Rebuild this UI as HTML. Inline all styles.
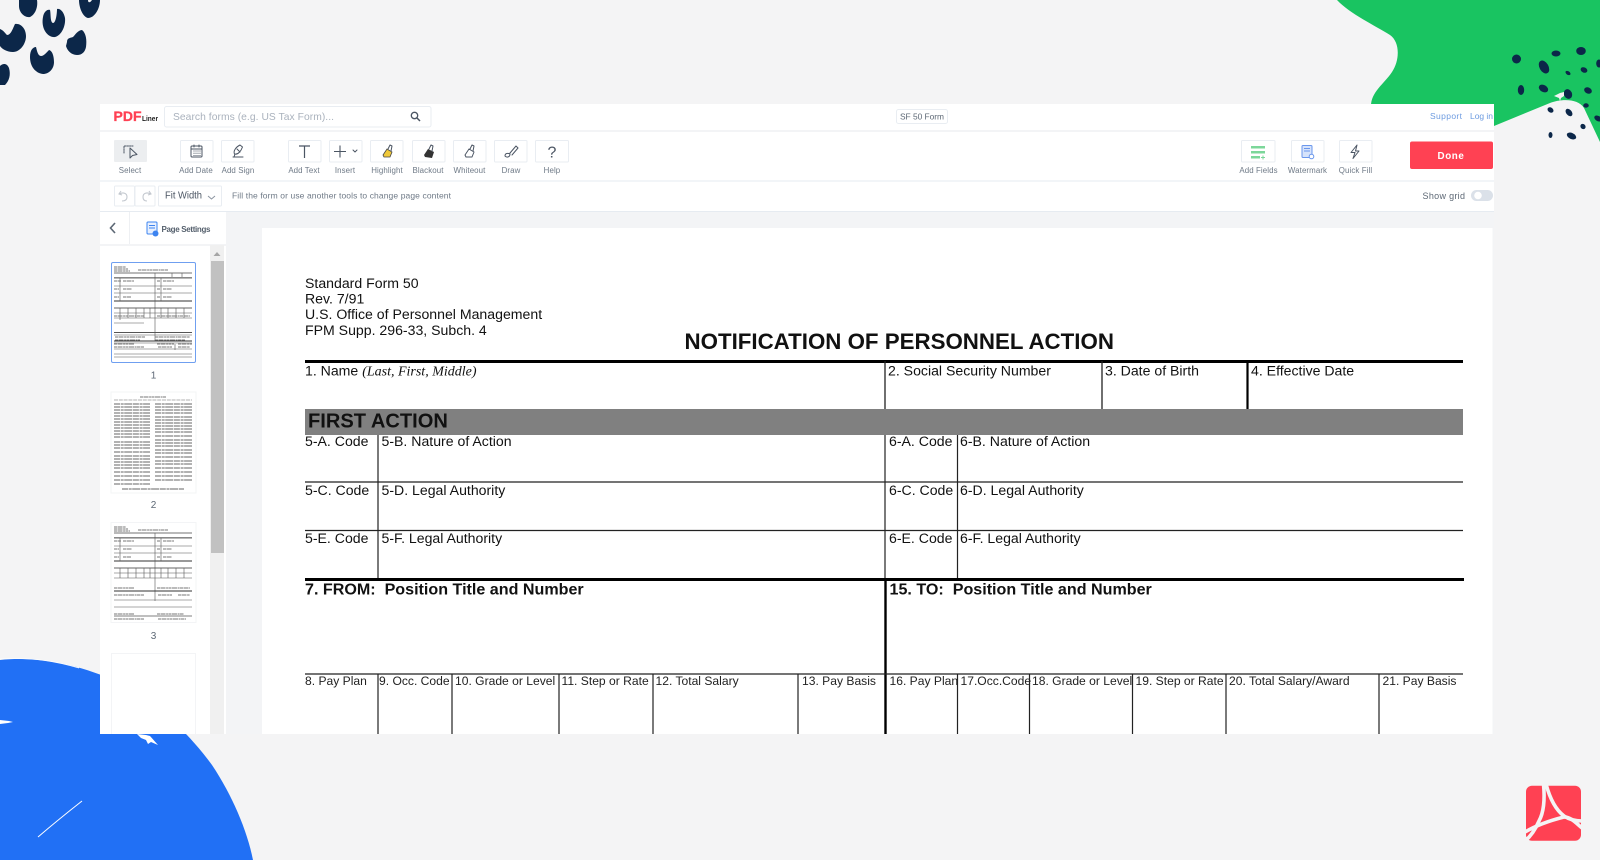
<!DOCTYPE html>
<html lang="en">
<head>
<meta charset="utf-8">
<title>SF 50 Form</title>
<style>
html,body{margin:0;padding:0;width:1600px;height:860px;overflow:hidden;background:#f4f4f5}
svg{display:block;position:absolute;left:0;top:0;filter:blur(.35px)}
text{font-family:"Liberation Sans",Arial,sans-serif;white-space:pre}
.l{font-size:7.9px;fill:#6f7a87;text-anchor:middle;letter-spacing:.1px}
.b{fill:#fff;stroke:#e9edf2;stroke-width:1}
.i{fill:none;stroke:#4b5563;stroke-width:1;stroke-linecap:round;stroke-linejoin:round}
.f{font-size:14.1px;fill:#111}
.s{font-size:12.1px;fill:#222}
.fb{font-size:16.1px;font-weight:bold;fill:#111}
.k{stroke:#222;stroke-width:1.2;fill:none}
.kk{stroke:#000;stroke-width:3;fill:none}
.d{fill:#0c2749}
.th{stroke:#555;stroke-width:.6;fill:none}
.tt{stroke:#777;stroke-width:.9;fill:none;stroke-dasharray:3 .5 5 .6 2 .4}
</style>
</head>
<body>
<svg width="1600" height="860" viewBox="0 0 1600 860" xmlns="http://www.w3.org/2000/svg">
<!-- decorative background -->
<path d="M1337 0C1350 14 1376 26 1390 35C1400 42 1400 60 1392 72C1384 84 1371 92 1371 106L1371 130L1494 126L1550 103C1560 99 1578 98 1584 108L1600 142L1600 0Z" fill="#19c461"/>
<path d="M0 660C40 656 80 665 118 682C160 705 190 735 212 765C232 795 247 830 253 860L0 860Z" fill="#2170f5"/>
<path d="M0 659C35 657 58 662 79 668" fill="none" stroke="#fff" stroke-width=".7"/>
<path d="M38 837C52 825 68 812 82 801" fill="none" stroke="#fff" stroke-width="1"/>
<path d="M0 720L9 721L13 722L8 723L0 724Z" fill="#fff"/>

<!-- top left dark blobs -->
<path class="d" d="M19 0L37 0C38 6 36 14 30 17C24 18 19 12 19 6Z"/>
<path class="d" d="M43 17C44 11 48 9 50 10C51 14 50 22 53 23C56 23 57 13 57 9C60 8 64 12 65 18C66 27 60 38 53 37C46 36 41 27 43 17Z"/>
<path class="d" d="M79 0L100 0C100 8 95 18 88 18C83 17 79 8 79 0ZM88 0C88 3 90 3 92 0Z"/>
<path class="d" d="M0 29C3 30 5 33 7 35C11 35 13 28 15 24C21 23 26 29 26 36C26 44 20 52 13 52C7 52 2 49 0 46Z"/>
<path class="d" d="M67 42C67 38 70 38 73 37C75 35 78 30 82 30C86 33 87 40 86 47C85 52 82 55 77 55C71 55 67 50 66 46Z"/>
<path class="d" d="M30 57C30 50 33 47 36 47C37 51 38 56 41 56C44 56 47 52 49 50C53 51 54 58 54 62C54 69 49 74 43 74C35 73 30 66 30 57Z"/>
<path class="d" d="M0 66C3 63 7 63 9 68C11 75 9 81 5 85L0 85Z"/>

<!-- right dots -->
<g class="d">
<ellipse cx="1516.5" cy="59" rx="4.5" ry="4.5"/>
<ellipse cx="1544" cy="67" rx="4.5" ry="7" transform="rotate(-30 1544 67)"/>
<ellipse cx="1556" cy="53.5" rx="4.5" ry="3"/>
<ellipse cx="1581" cy="51" rx="4.8" ry="4"/>
<ellipse cx="1599" cy="63.5" rx="2.8" ry="4"/>
<ellipse cx="1568" cy="73" rx="2.8" ry="1.8" transform="rotate(35 1568 73)"/>
<ellipse cx="1584" cy="70" rx="3.5" ry="2.6" transform="rotate(25 1584 70)"/>
<ellipse cx="1521" cy="90" rx="3.2" ry="5"/>
<ellipse cx="1543.5" cy="88.5" rx="5" ry="3.5" transform="rotate(30 1543.5 88.5)"/>
<ellipse cx="1568" cy="94" rx="4" ry="5" transform="rotate(-25 1568 94)"/>
<ellipse cx="1588" cy="90.5" rx="4" ry="3" transform="rotate(25 1588 90.5)"/>
<ellipse cx="1586" cy="105.5" rx="2.8" ry="2.2"/>
<ellipse cx="1550.5" cy="110" rx="3.2" ry="2.5" transform="rotate(35 1550.5 110)"/>
<ellipse cx="1569" cy="112.5" rx="4.2" ry="2.8" transform="rotate(50 1569 112.5)"/>
<ellipse cx="1598" cy="118.5" rx="4" ry="2.6" transform="rotate(30 1598 118.5)"/>
<ellipse cx="1583" cy="126.5" rx="2.8" ry="2.4" transform="rotate(45 1583 126.5)"/>
<ellipse cx="1550.5" cy="135" rx="2" ry="3"/>
<ellipse cx="1571.5" cy="136" rx="5" ry="3" transform="rotate(25 1571.5 136)"/>
</g>
<path d="M1554 96L1560 93L1564 92L1564 96L1561 98L1560 101L1559 98Z" fill="#f4f4f5"/>

<!-- PDF badge -->
<rect x="1526" y="785.7" width="55" height="55" rx="6" fill="#ff4153"/>
<g fill="none" stroke="#f4f4f5" stroke-width="3.6">
<path d="M1543.5 784C1545 800 1544 812 1539 821C1536 828 1531 836 1525 841"/>
<path d="M1546 784C1550 799 1556 810 1564 816C1570 820 1576 821 1582 821"/>
<path d="M1525 832C1537 825 1552 820 1564 817C1571 817 1576 823 1582 828"/>
</g>

<!-- app window -->
<rect x="100" y="104" width="1394" height="630" fill="#fff"/>
<rect x="100" y="130" width="1394" height="2" fill="#f3f4f6"/>
<rect x="100" y="180.5" width="1394" height="1" fill="#e6ebf1"/>
<rect x="100" y="211" width="1394" height="1" fill="#e6ebf1"/>
<rect x="100" y="212" width="1394" height="522" fill="#f3f4f6"/>

<!-- header row -->
<text x="113.5" y="121" font-size="14" font-weight="bold" fill="#ff4153" stroke="#ff4153" stroke-width=".3" textLength="28" lengthAdjust="spacingAndGlyphs">PDF</text>
<text x="142" y="121" font-size="7" font-weight="bold" fill="#222" textLength="16" lengthAdjust="spacingAndGlyphs">Liner</text>
<rect class="b" x="164.5" y="106.5" width="266.5" height="20.5" rx="2"/>
<text x="173" y="120" font-size="10.3" fill="#aab2bd" textLength="161">Search forms (e.g. US Tax Form)...</text>
<circle cx="414.5" cy="115.5" r="3.2" fill="none" stroke="#4b5563" stroke-width="1.3"/>
<path d="M417 118L420 121" stroke="#4b5563" stroke-width="1.5"/>
<rect class="b" x="896.5" y="109.5" width="51" height="14" rx="2"/>
<text x="922" y="119.5" font-size="8.4" fill="#5d6875" text-anchor="middle" textLength="44">SF 50 Form</text>
<text x="1430" y="119" font-size="8.5" fill="#6d9be0" textLength="32">Support</text>
<text x="1470" y="119" font-size="8.5" fill="#6d9be0" textLength="23">Log in</text>

<!-- toolbar buttons -->
<rect x="114" y="140" width="33" height="22" fill="#eceef0" rx="1"/>
<rect class="b" x="180.5" y="140.5" width="32.5" height="21.5" rx="1"/>
<rect class="b" x="221.5" y="140.5" width="32.5" height="21.5" rx="1"/>
<rect class="b" x="288.5" y="140.5" width="32.5" height="21.5" rx="1"/>
<rect class="b" x="329.5" y="140.5" width="32.5" height="21.5" rx="1"/>
<rect class="b" x="370.5" y="140.5" width="32.5" height="21.5" rx="1"/>
<rect class="b" x="412.5" y="140.5" width="32.5" height="21.5" rx="1"/>
<rect class="b" x="453.5" y="140.5" width="32.5" height="21.5" rx="1"/>
<rect class="b" x="494.5" y="140.5" width="32.5" height="21.5" rx="1"/>
<rect class="b" x="535.5" y="140.5" width="33" height="21.5" rx="1"/>
<rect class="b" x="1241.5" y="140.5" width="33.5" height="21.5" rx="1"/>
<rect class="b" x="1291.5" y="140.5" width="32.5" height="21.5" rx="1"/>
<rect class="b" x="1339.5" y="140.5" width="32.5" height="21.5" rx="1"/>

<!-- icons -->
<path class="i" stroke-dasharray="1.5 1" d="M124 153L124 146L133 146"/>
<path class="i" d="M130 148L130 158L132.5 155.5L137 154.5Z"/>
<rect class="i" x="191" y="146" width="11" height="11" rx="1"/>
<path class="i" d="M191 149H202M194 145V147M199 145V147"/>
<path d="M193.5 151H200.5M193.5 153.3H200.5M193.5 155.5H200.5" stroke="#4b5563" stroke-dasharray="1 1"/>
<path class="i" d="M233 157L243 157M234.5 154C233 151 236 147 240 145L242.5 147C241 151 238 155 234.5 154ZM237 149L240 152M235 154L234 157"/>
<path d="M299 146H310M304.5 146V158" stroke="#4b5563" stroke-width="1.2" fill="none"/>
<path d="M334 151.5H346M340 145.5V157.5" stroke="#4b5563" stroke-width="1.1" fill="none"/>
<path class="i" d="M353 150L355 152L357 150"/>
<path d="M383 155L387 149L392 152L390 157L384 157Z" fill="#f0c93a" stroke="#444" stroke-width=".8"/>
<path class="i" d="M388 149L390 145L392 146L391 151"/>
<path d="M424 155L428 149L434 152L432 158L425 157Z" fill="#333"/>
<path class="i" d="M429 149L431 145L433 146L432 151"/>
<path class="i" d="M465 155L469 149L474 152L472 157L466 157ZM470 149L472 145L474 146L473 151"/>
<path class="i" d="M505 156C505 153 508 153 510 154C510 157 507 158 505 156ZM510 153L516 146L518 148L512 155"/>
<text x="552" y="157.5" font-size="16" fill="#4b5563" text-anchor="middle">?</text>
<path d="M1251 146H1265V148.5H1251ZM1251 151H1265V153.5H1251ZM1251 156H1260V158.5H1251Z" fill="#7cd79a"/>
<path d="M1261 157.5H1265M1263 155.5V159.5" stroke="#7cd79a"/>
<rect x="1302" y="145.5" width="10" height="12" rx="1" fill="#d6e3fb" stroke="#6a97ec"/>
<path d="M1304 148.5H1310M1304 151H1310" stroke="#6a97ec"/>
<circle cx="1311.5" cy="156.5" r="2.3" fill="#fff" stroke="#6a97ec"/>
<path class="i" d="M1357 145L1351 152.5L1355 152.5L1353 158.5L1359 151L1355.5 151Z"/>

<!-- toolbar labels -->
<text class="l" x="130" y="173">Select</text>
<text class="l" x="196" y="173">Add Date</text>
<text class="l" x="238" y="173">Add Sign</text>
<text class="l" x="304" y="173">Add Text</text>
<text class="l" x="345" y="173">Insert</text>
<text class="l" x="387" y="173">Highlight</text>
<text class="l" x="428" y="173">Blackout</text>
<text class="l" x="469.5" y="173">Whiteout</text>
<text class="l" x="511" y="173">Draw</text>
<text class="l" x="552" y="173">Help</text>
<text class="l" x="1258.5" y="173">Add Fields</text>
<text class="l" x="1307.5" y="173">Watermark</text>
<text class="l" x="1355.5" y="173">Quick Fill</text>

<rect x="1410" y="141.5" width="83" height="27.5" rx="2" fill="#ff4153"/>
<text x="1451" y="159" font-size="9.8" font-weight="bold" fill="#fff" text-anchor="middle" letter-spacing=".6">Done</text>

<!-- row 3 -->
<rect class="b" x="114.5" y="186" width="20" height="20" rx="1"/>
<rect class="b" x="135" y="186" width="20" height="20" rx="1"/>
<rect class="b" x="158.5" y="186" width="63" height="20" rx="1"/>
<path d="M121 191L119 194L122 195M119.5 194C123 192 127 193 127 197C127 200 125 201 122 201" fill="none" stroke="#c3c8cf" stroke-width="1.1"/>
<path d="M149 191L151 194L148 195M150.5 194C147 192 143 193 143 197C143 200 145 201 147 201" fill="none" stroke="#c3c8cf" stroke-width="1.1"/>
<text x="165" y="198.5" font-size="10.5" fill="#4b5563" textLength="37" lengthAdjust="spacingAndGlyphs">Fit Width</text>
<path d="M208 196L211.5 199L215 196" fill="none" stroke="#8a93a0"/>
<text x="232" y="198.5" font-size="8.5" fill="#6f7a87" textLength="219">Fill the form or use another tools to change page content</text>
<text x="1422.5" y="199" font-size="9" fill="#5d6875" textLength="42.5">Show grid</text>
<rect x="1471" y="190" width="22" height="11" rx="5.5" fill="#dbe1e9"/>
<circle cx="1478" cy="195.5" r="3.8" fill="#fff"/>

<!-- sidebar -->
<rect x="100" y="212" width="126" height="522" fill="#fff"/>
<rect x="100" y="244" width="126" height="2" fill="#f3f4f6"/>
<rect x="129" y="212" width="1" height="32" fill="#eef0f3"/>
<path d="M115 223L110.5 228L115 233" fill="none" stroke="#5d6875" stroke-width="1.6"/>
<rect x="147" y="222" width="10" height="12" rx="1" fill="#e8f0fe" stroke="#3d84f0"/>
<path d="M149 225.5H155M149 228H155" stroke="#3d84f0"/>
<circle cx="155.5" cy="233.5" r="3" fill="#3d84f0"/>
<text x="161.5" y="232" font-size="8" font-weight="bold" fill="#55606d" textLength="49">Page Settings</text>
<rect x="210" y="245" width="14" height="489" fill="#f0f0f0"/>
<rect x="211" y="261" width="13" height="292" fill="#c1c1c1"/>
<path d="M213.5 256L217 252L220.5 256Z" fill="#a6a6a6"/>

<!-- thumbnail 1 -->
<rect x="111.5" y="262.5" width="84" height="100" rx="1.5" fill="#fff" stroke="#6f9ff0"/>
<g transform="translate(114 265)">
<path class="tt" d="M0 2H12M0 4H14M0 6H16"/>
<path class="tt" d="M24 5H54"/>
<path d="M0 8H78" stroke="#444" stroke-width=".8"/>
<rect x="0" y="12" width="78" height="1.6" fill="#888"/>
<path class="th" d="M0 21H78M0 28H78"/>
<path d="M0 36H78" stroke="#333"/>
<path class="th" d="M6 13V36M41 8V76M47 13V36M58 8V12M68 8V12"/>
<path class="tt" d="M0 16H7M9 16H20M43 16H46M49 16H60M0 24H5M9 24H18M43 24H46M49 24H58M0 32H5M9 32H17M43 32H46M49 32H58"/>
<path d="M0 43H78" stroke="#333" stroke-width=".7"/>
<path class="th" d="M0 48H78M0 53H78M6 43V55M14 43V53M22 43V53M30 43V53M36 43V53M47 43V53M54 43V53M62 43V53M70 43V53"/>
<path class="tt" d="M0 51H30M43 51H76"/>
<path d="M0 76H78" stroke="#333"/>
<path class="th" d="M0 58H30M0 84H78M0 89H78"/>
<path class="tt" d="M0 79H20M43 79H60M64 79H78M0 82H30M44 82H58M64 82H76"/>
<path class="th" d="M0 92H78"/>
</g>
<rect x="114" y="332" width="78" height="1" fill="#555"/>
<path class="tt" d="M115 337H145M155 337H190M115 340H140M155 340H185"/>
<path d="M114 335H192M114 343H192M175 350V344" stroke="#555" stroke-width=".6"/>
<text x="153.5" y="378.5" font-size="10" fill="#5d6875" text-anchor="middle">1</text>

<!-- thumbnail 2 -->
<rect x="111" y="392" width="85" height="101" fill="#fff" stroke="#f3f4f6"/>
<path class="tt" d="M140 397H166"/>
<path d="M114 400H192" stroke="#999" stroke-width=".7" stroke-dasharray="4 .8"/>
<g fill="none" stroke="#666" stroke-width="1" stroke-dasharray="6 .7 3 .5 8 .7">
<path d="M114 404H150M114 407H150M114 410H150M114 413H150M114 416H150M114 419H150M114 422H150M114 425H150M114 428H150M114 431H150M114 434H150M114 437H150M114 442H150M114 445H150M114 448H150M114 452H150M114 456H150M114 459H150M114 462H150M114 465H150M114 468H150M114 472H150M114 476H150M114 480H150M114 484H150"/>
<path d="M155 404H192M155 407H192M155 410H192M155 413H192M155 417H192M155 420H192M155 423H192M155 426H192M155 429H192M155 432H192M155 436H192M155 440H192M155 443H192M155 446H192M155 450H192M155 453H192M155 457H192M155 461H192M155 464H192M155 468H192M155 472H192M155 476H192M155 480H192"/>
<path d="M122 489H184"/>
</g>
<text x="153.5" y="508" font-size="10" fill="#5d6875" text-anchor="middle">2</text>

<!-- thumbnail 3 -->
<rect x="111" y="522.5" width="85" height="100" fill="#fff" stroke="#f3f4f6"/>
<g transform="translate(114 525)">
<path class="tt" d="M0 2H12M0 4H14M0 6H16"/>
<path class="tt" d="M24 5H54"/>
<path d="M0 8H78" stroke="#444" stroke-width=".8"/>
<rect x="0" y="12" width="78" height="1.6" fill="#888"/>
<path class="th" d="M0 21H78M0 28H78"/>
<path d="M0 36H78" stroke="#333"/>
<path class="th" d="M6 13V36M41 8V76M47 13V36"/>
<path class="tt" d="M0 16H7M9 16H20M43 16H46M49 16H60M0 24H5M9 24H18M43 24H46M49 24H58M0 32H5M9 32H17M43 32H46M49 32H58"/>
<path d="M0 43H78" stroke="#333" stroke-width=".7"/>
<path class="th" d="M0 48H78M0 53H78M6 43V53M14 43V53M22 43V53M30 43V53M36 43V53M47 43V53M54 43V53M62 43V53M70 43V53"/>
<path d="M0 66H78" stroke="#333"/>
<path class="tt" d="M0 63H20M43 63H76M0 70H30M44 70H58M64 70H76"/>
<path class="th" d="M0 75H78M0 82H78"/>
<path d="M0 91H78" stroke="#555" stroke-width=".7"/>
<path class="tt" d="M0 89H20M43 89H70M0 94H30M44 94H72"/>
</g>
<text x="153.5" y="639" font-size="10" fill="#5d6875" text-anchor="middle">3</text>

<!-- thumbnail 4 -->
<path d="M111.5 734V653.5H195.5V734" fill="#fff" stroke="#f3f4f6"/>
<path d="M137 734L146 735L150 736L158 745L151 742L148 744L146 740L141 738Z" fill="#fff"/>

<!-- document page -->
<rect x="262" y="228" width="1230.5" height="506" fill="#fff"/>
<text class="f" x="305" y="288">Standard Form 50</text>
<text class="f" x="305" y="303.5">Rev. 7/91</text>
<text class="f" x="305" y="319">U.S. Office of Personnel Management</text>
<text class="f" x="305" y="335">FPM Supp. 296-33, Subch. 4</text>
<text x="684.5" y="349" font-size="22.3" font-weight="bold" fill="#111">NOTIFICATION OF PERSONNEL ACTION</text>

<path class="kk" d="M305 361.5H1463"/>
<rect x="305" y="409" width="1158" height="26" fill="#808080"/>
<path d="M885 361V409M1102 361V409" stroke="#222" stroke-width="1.3" fill="none"/>
<path d="M1247.5 361V409" stroke="#000" stroke-width="2.2" fill="none"/>
<text x="308" y="427.5" font-size="20.1" font-weight="bold" fill="#111">FIRST ACTION</text>

<text class="f" x="305" y="375.5">1. Name <tspan font-family="Liberation Serif" font-style="italic" font-size="14">(Last, First, Middle)</tspan></text>
<text class="f" x="888" y="375.5">2. Social Security Number</text>
<text class="f" x="1105" y="375.5">3. Date of Birth</text>
<text class="f" x="1251" y="375.5">4. Effective Date</text>

<path class="k" d="M305 482H1463M305 530.5H1463"/>
<path class="k" d="M378 435V579M885 435V579M957.5 435V579"/>
<text class="f" x="305" y="446">5-A. Code</text>
<text class="f" x="381.5" y="446">5-B. Nature of Action</text>
<text class="f" x="889" y="446">6-A. Code</text>
<text class="f" x="960" y="446">6-B. Nature of Action</text>
<text class="f" x="305" y="495">5-C. Code</text>
<text class="f" x="381.5" y="495">5-D. Legal Authority</text>
<text class="f" x="889" y="495">6-C. Code</text>
<text class="f" x="960" y="495">6-D. Legal Authority</text>
<text class="f" x="305" y="543">5-E. Code</text>
<text class="f" x="381.5" y="543">5-F. Legal Authority</text>
<text class="f" x="889" y="543">6-E. Code</text>
<text class="f" x="960" y="543">6-F. Legal Authority</text>

<path class="kk" d="M305 579.5H1464"/>
<text class="fb" x="305" y="594.5">7. FROM:  Position Title and Number</text>
<text class="fb" x="889.5" y="594.5">15. TO:  Position Title and Number</text>
<path d="M885.5 579V734" stroke="#000" stroke-width="2.4" fill="none"/>
<path class="k" d="M305 674H1463"/>
<path class="k" d="M378 674V734M452 674V734M559 674V734M653 674V734M798 674V734M957.5 674V734M1029.5 674V734M1132.5 674V734M1226 674V734M1379 674V734"/>
<text class="s" x="305" y="685">8. Pay Plan</text>
<text class="s" x="379" y="685">9. Occ. Code</text>
<text class="s" x="455" y="685">10. Grade or Level</text>
<text class="s" x="561.5" y="685">11. Step or Rate</text>
<text class="s" x="655.5" y="685">12. Total Salary</text>
<text class="s" x="802" y="685">13. Pay Basis</text>
<text class="s" x="889.5" y="685">16. Pay Plan</text>
<text class="s" x="960.5" y="685">17.Occ.Code</text>
<text class="s" x="1032" y="685">18. Grade or Level</text>
<text class="s" x="1135.5" y="685">19. Step or Rate</text>
<text class="s" x="1229" y="685">20. Total Salary/Award</text>
<text class="s" x="1382.5" y="685">21. Pay Basis</text>
</svg>
</body>
</html>
